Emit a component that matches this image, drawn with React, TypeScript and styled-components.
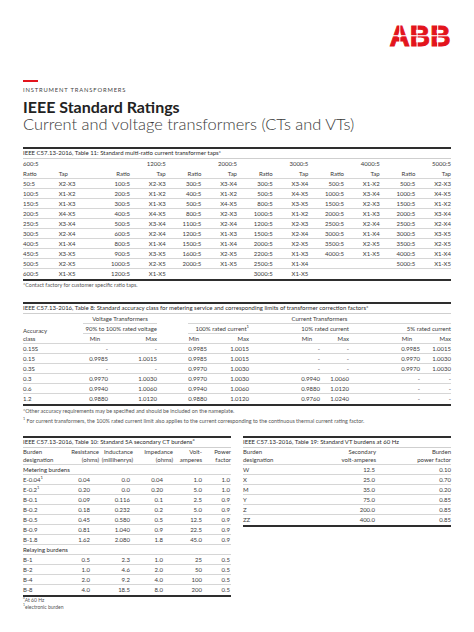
import React from 'react';
import styled, { createGlobalStyle } from 'styled-components';

const GlobalStyle = createGlobalStyle`
  html, body {
    margin: 0;
    padding: 0;
    background: #fff;
  }
  body {
    font-family: Lato, "Open Sans", sans-serif;
    color: #333;
  }
  sup {
    font-size: 70%;
    line-height: 0;
    vertical-align: super;
  }
`;

const Page = styled.div`
  width: 474px;
  box-sizing: border-box;
  padding: 25px 23px 0;
`;

const Masthead = styled.header`
  display: flex;
  justify-content: flex-end;
  height: 21px;
`;

const AccentBar = styled.div`
  width: 15px;
  height: 2px;
  margin-top: 34px;
  background: #e3141c;
`;

const Eyebrow = styled.div`
  margin-top: 4px;
  font-size: 5.8px;
  line-height: 8px;
  letter-spacing: 0.85px;
  color: #444;
`;

const Title = styled.h1`
  margin: 4px 0 0;
  font-size: 16px;
  line-height: 17px;
  font-weight: 700;
  color: #222;
`;

const Subtitle = styled.h2`
  margin: 0;
  font-size: 16.4px;
  line-height: 17px;
  font-weight: 300;
  color: #3a3a3a;
`;

const TableBlock = styled.section<{ $mt: number }>`
  margin-top: ${p => p.$mt}px;
  border-top: 2px solid #2e2e2e;
  font-size: 6px;
  color: #3a3a3a;
`;

const Caption = styled.div`
  height: 9px;
  line-height: 8px;
  border-bottom: 1px solid #cfcfcf;
  white-space: nowrap;
  color: #2a2a2a;
`;

const Body = styled.div`
  border-bottom: 2px solid #2e2e2e;
  & > div:last-child {
    border-bottom: 0;
  }
`;

const Row = styled.div<{ $cols: string; $h?: number; $rule?: boolean }>`
  display: grid;
  grid-template-columns: ${p => p.$cols};
  height: ${p => p.$h ?? 10}px;
  line-height: ${p => (p.$h ?? 10) - 1}px;
  box-sizing: border-box;
  border-bottom: ${p => (p.$rule === false ? '0' : '1px solid #d6d6d6')};
`;

const HeadGrid = styled.div<{ $cols: string }>`
  display: grid;
  grid-template-columns: ${p => p.$cols};
  grid-template-rows: 10px 10px 10px;
  line-height: 9px;
`;

const Cell = styled.div<{
  $align?: 'left' | 'right' | 'center';
  $span?: number;
  $pad?: number;
  $indent?: number;
  $col?: string;
  $row?: string;
  $rule?: boolean;
  $lh?: number;
}>`
  text-align: ${p => p.$align ?? 'left'};
  white-space: nowrap;
  padding-right: ${p => p.$pad ?? 0}px;
  margin-left: ${p => p.$indent ?? 0}px;
  ${p => (p.$span ? `grid-column: span ${p.$span};` : '')}
  ${p => (p.$col ? `grid-column: ${p.$col};` : '')}
  ${p => (p.$row ? `grid-row: ${p.$row}; align-self: end;` : '')}
  ${p => (p.$lh ? `line-height: ${p.$lh}px;` : '')}
  border-bottom: ${p => (p.$rule ? '1px solid #d6d6d6' : '0')};
`;

const SectionLabel = styled(Cell)`
  color: #2a2a2a;
`;

const Footnote = styled.div<{ $h?: number; $size?: number }>`
  font-size: ${p => p.$size ?? 5.4}px;
  line-height: ${p => p.$h ?? 9}px;
  color: #555;
  white-space: nowrap;
`;

const SideBySide = styled.div`
  display: flex;
  gap: 12px;
  align-items: flex-start;
  margin-top: 10px;
`;

const Half = styled.div`
  width: 208px;
`;

const LogoSvg = styled.svg`
  overflow: visible;
`;

const AbbLogo = () => (
  <LogoSvg width="62" height="22" viewBox="0 0 62 22">
    <text
      x="0.5"
      y="21"
      fontFamily="'Liberation Sans', Arial, sans-serif"
      fontWeight="700"
      fontSize="29"
      fill="#e3141c"
      stroke="#e3141c"
      strokeWidth="0.9"
      textLength="61"
      lengthAdjust="spacingAndGlyphs"
    >
      ABB
    </text>
    <rect x="0" y="10.2" width="63" height="1.1" fill="#fff" />
    <rect x="10.3" y="-1" width="1" height="24" fill="#fff" />
    <rect x="27.6" y="-1" width="1" height="24" fill="#fff" />
    <rect x="48.2" y="-1" width="1" height="24" fill="#fff" />
  </LogoSvg>
);

/* ---------- Table 11: multi-ratio CT taps ---------- */

const T1_COLS = 'repeat(12, 1fr)';

const T1_GROUPS: { head: string; taps: [string, string][] }[] = [
  {
    head: '600:5',
    taps: [
      ['50:5', 'X2-X3'], ['100:5', 'X1-X2'], ['150:5', 'X1-X3'], ['200:5', 'X4-X5'],
      ['250:5', 'X3-X4'], ['300:5', 'X2-X4'], ['400:5', 'X1-X4'], ['450:5', 'X3-X5'],
      ['500:5', 'X2-X5'], ['600:5', 'X1-X5'],
    ],
  },
  {
    head: '1200:5',
    taps: [
      ['100:5', 'X2-X3'], ['200:5', 'X1-X2'], ['300:5', 'X1-X3'], ['400:5', 'X4-X5'],
      ['500:5', 'X3-X4'], ['600:5', 'X2-X4'], ['800:5', 'X1-X4'], ['900:5', 'X3-X5'],
      ['1000:5', 'X2-X5'], ['1200:5', 'X1-X5'],
    ],
  },
  {
    head: '2000:5',
    taps: [
      ['300:5', 'X3-X4'], ['400:5', 'X1-X2'], ['500:5', 'X4-X5'], ['800:5', 'X2-X3'],
      ['1100:5', 'X2-X4'], ['1200:5', 'X1-X3'], ['1500:5', 'X1-X4'], ['1600:5', 'X2-X5'],
      ['2000:5', 'X1-X5'],
    ],
  },
  {
    head: '3000:5',
    taps: [
      ['300:5', 'X3-X4'], ['500:5', 'X4-X5'], ['800:5', 'X3-X5'], ['1000:5', 'X1-X2'],
      ['1200:5', 'X2-X3'], ['1500:5', 'X2-X4'], ['2000:5', 'X2-X5'], ['2200:5', 'X1-X3'],
      ['2500:5', 'X1-X4'], ['3000:5', 'X1-X5'],
    ],
  },
  {
    head: '4000:5',
    taps: [
      ['500:5', 'X1-X2'], ['1000:5', 'X3-X4'], ['1500:5', 'X2-X3'], ['2000:5', 'X1-X3'],
      ['2500:5', 'X2-X4'], ['3000:5', 'X1-X4'], ['3500:5', 'X2-X5'], ['4000:5', 'X1-X5'],
    ],
  },
  {
    head: '5000:5',
    taps: [
      ['500:5', 'X2-X3'], ['1000:5', 'X4-X5'], ['1500:5', 'X1-X2'], ['2000:5', 'X3-X4'],
      ['2500:5', 'X2-X4'], ['3000:5', 'X3-X5'], ['3500:5', 'X2-X5'], ['4000:5', 'X1-X4'],
      ['5000:5', 'X1-X5'],
    ],
  },
];

const groupAlign = (g: number) => (g === 0 ? 'left' : 'right');

const TapsTable = () => (
  <>
    <TableBlock $mt={15}>
      <Caption>IEEE C57.13-2016, Table 11: Standard multi-ratio current transformer taps*</Caption>
      <Row $cols={T1_COLS} $rule={false}>
        {T1_GROUPS.map((g, i) => (
          <Cell key={g.head} $span={2} $align={groupAlign(i)}>{g.head}</Cell>
        ))}
      </Row>
      <Row $cols={T1_COLS}>
        {T1_GROUPS.map((g, i) => (
          <React.Fragment key={g.head}>
            <Cell $align={groupAlign(i)}>Ratio</Cell>
            <Cell $align={groupAlign(i)}>Tap</Cell>
          </React.Fragment>
        ))}
      </Row>
      <Body>
        {Array.from({ length: 10 }).map((_, r) => (
          <Row key={r} $cols={T1_COLS}>
            {T1_GROUPS.map((g, i) => (
              <React.Fragment key={g.head}>
                <Cell $align={groupAlign(i)}>{g.taps[r]?.[0] ?? ''}</Cell>
                <Cell $align={groupAlign(i)}>{g.taps[r]?.[1] ?? ''}</Cell>
              </React.Fragment>
            ))}
          </Row>
        ))}
      </Body>
    </TableBlock>
    <Footnote>*Contact factory for customer specific ratio taps.</Footnote>
  </>
);

/* ---------- Table 8: accuracy classes ---------- */

const T2_COLS = '60px 25px 49px 50px 42px 71px 29px 71px 31px';

const T2_ROWS: [string, ...string[]][] = [
  ['0.15S', '-', '-', '0.9985', '1.0015', '-', '-', '0.9985', '1.0015'],
  ['0.15', '0.9985', '1.0015', '0.9985', '1.0015', '-', '-', '0.9970', '1.0030'],
  ['0.3S', '-', '-', '0.9970', '1.0030', '-', '-', '0.9970', '1.0030'],
  ['0.3', '0.9970', '1.0030', '0.9970', '1.0030', '0.9940', '1.0060', '-', '-'],
  ['0.6', '0.9940', '1.0060', '0.9940', '1.0060', '0.9880', '1.0120', '-', '-'],
  ['1.2', '0.9880', '1.0120', '0.9880', '1.0120', '0.9760', '1.0240', '-', '-'],
];

const AccuracyTable = () => (
  <>
    <TableBlock $mt={12}>
      <Caption>
        IEEE C57.13-2016, Table 8: Standard accuracy class for metering service and corresponding
        limits of transformer correction factors*
      </Caption>
      <HeadGrid $cols={T2_COLS}>
        <Cell $col="2 / span 2" $align="center" $rule>Voltage Transformers</Cell>
        <Cell $col="4 / span 6" $align="center" $indent={31} $rule>Current Transformers</Cell>
        <Cell $col="1" $row="2 / span 2" $lh={8} $rule>
          Accuracy
          <br />
          class
        </Cell>
        <Cell $col="2 / span 2" $align="right" $rule>90% to 100% rated voltage</Cell>
        <Cell $col="4 / span 2" $align="right" $indent={31} $rule>
          100% rated current<sup>1</sup>
        </Cell>
        <Cell $col="6 / span 2" $align="right" $rule>10% rated current</Cell>
        <Cell $col="8 / span 2" $align="right" $rule>5% rated current</Cell>
        {[0, 1, 2, 3].map(k => (
          <React.Fragment key={k}>
            <Cell $align="right" $pad={8} $rule>Min</Cell>
            <Cell $align="right" $rule>Max</Cell>
          </React.Fragment>
        ))}
      </HeadGrid>
      <Body>
        {T2_ROWS.map(([cls, ...vals]) => (
          <Row key={cls} $cols={T2_COLS}>
            <Cell>{cls}</Cell>
            {vals.map((v, i) => (
              <Cell key={i} $align="right">{v}</Cell>
            ))}
          </Row>
        ))}
      </Body>
    </TableBlock>
    <Footnote $h={10}>
      *Other accuracy requirements may be specified and should be included on the nameplate.
    </Footnote>
    <Footnote $h={10}>
      <sup>1</sup> For current transformers, the 100% rated current limit also applies to the current
      corresponding to the continuous thermal current rating factor.
    </Footnote>
  </>
);

/* ---------- Table 10: CT burdens ---------- */

const T3_COLS = '47px 29px 34px 40px 29px 29px';
const T3_PAD = [0, 9, 3, 10, 0, 1];

type BurdenRow = [React.ReactNode, string, string, string, string, string];

const METERING: BurdenRow[] = [
  [<>E-0.04<sup>1</sup></>, '0.04', '0.0', '0.04', '1.0', '1.0'],
  [<>E-0.2<sup>1</sup></>, '0.20', '0.0', '0.20', '5.0', '1.0'],
  ['B-0.1', '0.09', '0.116', '0.1', '2.5', '0.9'],
  ['B-0.2', '0.18', '0.232', '0.2', '5.0', '0.9'],
  ['B-0.5', '0.45', '0.580', '0.5', '12.5', '0.9'],
  ['B-0.9', '0.81', '1.040', '0.9', '22.5', '0.9'],
  ['B-1.8', '1.62', '2.080', '1.8', '45.0', '0.9'],
];

const RELAYING: BurdenRow[] = [
  ['B-1', '0.5', '2.3', '1.0', '25', '0.5'],
  ['B-2', '1.0', '4.6', '2.0', '50', '0.5'],
  ['B-4', '2.0', '9.2', '4.0', '100', '0.5'],
  ['B-8', '4.0', '18.5', '8.0', '200', '0.5'],
];

const burdenRows = (rows: BurdenRow[], prefix: string) =>
  rows.map((r, k) => (
    <Row key={prefix + k} $cols={T3_COLS}>
      {r.map((v, i) => (
        <Cell key={i} $align={i === 0 ? 'left' : 'right'} $pad={T3_PAD[i]}>{v}</Cell>
      ))}
    </Row>
  ));

const CtBurdenTable = () => (
  <Half>
    <TableBlock $mt={0}>
      <Caption>
        IEEE C57.13-2016, Table 10: Standard 5A secondary CT burdens<sup>a</sup>
      </Caption>
      <Row $cols={T3_COLS} $h={17}>
        <Cell $lh={8}>Burden<br />designation</Cell>
        <Cell $lh={8} $align="right">Resistance<br />(ohms)</Cell>
        <Cell $lh={8} $align="right">Inductance<br />(millihenrys)</Cell>
        <Cell $lh={8} $align="right">Impedance<br />(ohms)</Cell>
        <Cell $lh={8} $align="right">Volt-<br />amperes</Cell>
        <Cell $lh={8} $align="right">Power<br />factor</Cell>
      </Row>
      <Body>
        <Row $cols="1fr">
          <SectionLabel>Metering burdens</SectionLabel>
        </Row>
        {burdenRows(METERING, 'm')}
        <Row $cols="1fr">
          <SectionLabel>Relaying burdens</SectionLabel>
        </Row>
        {burdenRows(RELAYING, 'r')}
      </Body>
    </TableBlock>
    <Footnote $h={7} $size={5}><sup>a</sup>At 60 Hz</Footnote>
    <Footnote $h={7} $size={5}><sup>1</sup>electronic burden</Footnote>
  </Half>
);

/* ---------- Table 19: VT burdens ---------- */

const T4_COLS = '57px 76px 75px';

const VT_ROWS: [string, string, string][] = [
  ['W', '12.5', '0.10'],
  ['X', '25.0', '0.70'],
  ['M', '35.0', '0.20'],
  ['Y', '75.0', '0.85'],
  ['Z', '200.0', '0.85'],
  ['ZZ', '400.0', '0.85'],
];

const VtBurdenTable = () => (
  <Half>
    <TableBlock $mt={0}>
      <Caption>IEEE C57.13-2016, Table 19: Standard VT burdens at 60 Hz</Caption>
      <Row $cols={T4_COLS} $h={17}>
        <Cell $lh={8}>Burden<br />designation</Cell>
        <Cell $lh={8} $align="right">Secondary<br />volt-amperes</Cell>
        <Cell $lh={8} $align="right">Burden<br />power factor</Cell>
      </Row>
      <Body>
        {VT_ROWS.map(([d, va, pf]) => (
          <Row key={d} $cols={T4_COLS}>
            <Cell>{d}</Cell>
            <Cell $align="right" $pad={1}>{va}</Cell>
            <Cell $align="right">{pf}</Cell>
          </Row>
        ))}
      </Body>
    </TableBlock>
  </Half>
);

const App: React.FC = () => (
  <>
    <GlobalStyle />
    <Page>
      <Masthead>
        <AbbLogo />
      </Masthead>
      <AccentBar />
      <Eyebrow>INSTRUMENT TRANSFORMERS</Eyebrow>
      <Title>IEEE Standard Ratings</Title>
      <Subtitle>Current and voltage transformers (CTs and VTs)</Subtitle>
      <TapsTable />
      <AccuracyTable />
      <SideBySide>
        <CtBurdenTable />
        <VtBurdenTable />
      </SideBySide>
    </Page>
  </>
);

export default App;
